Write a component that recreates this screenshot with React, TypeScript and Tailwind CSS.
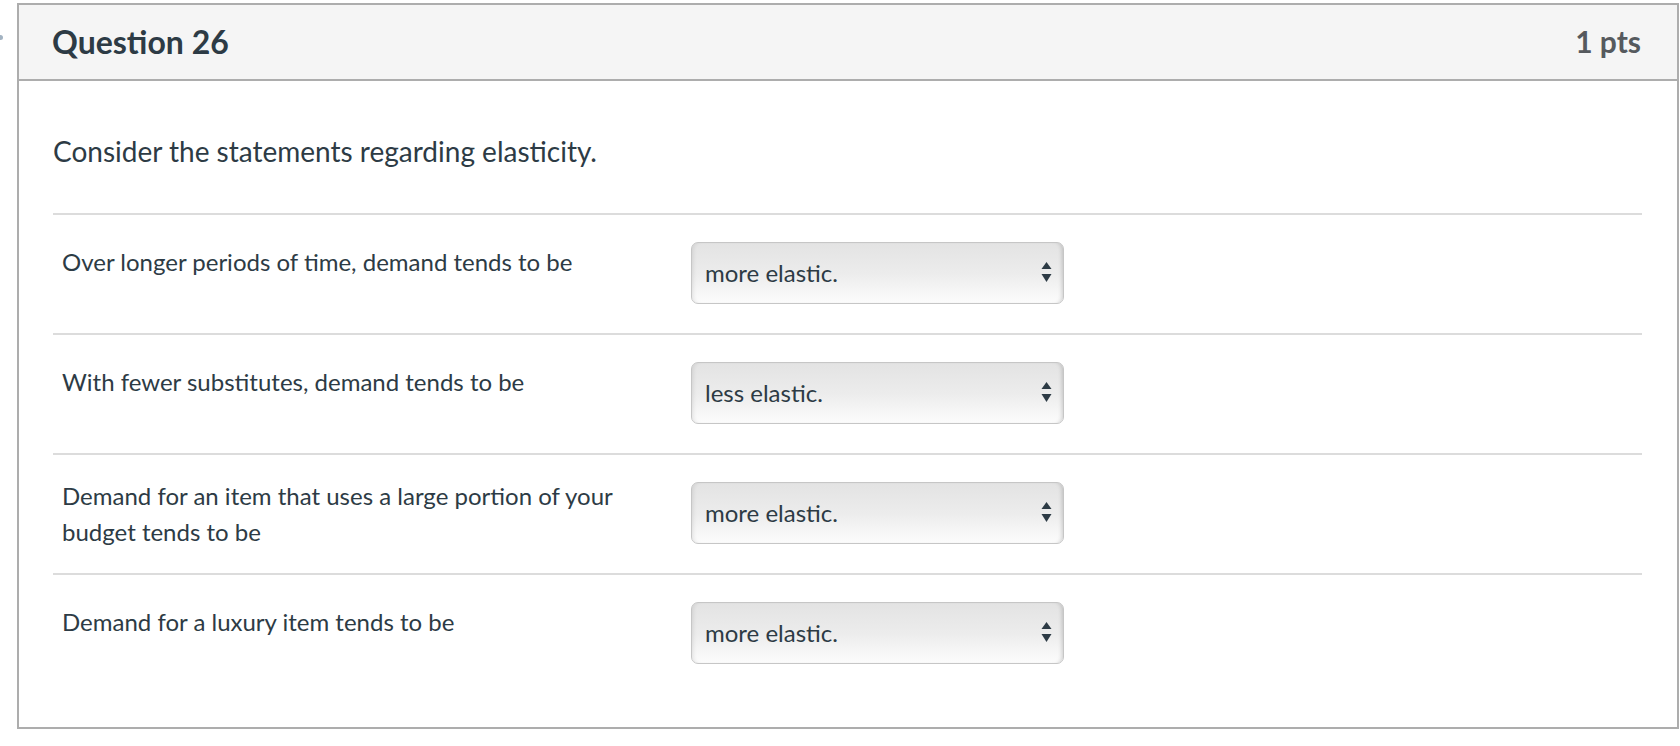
import React from "react";

type Row = { label: string; value: string; pad: string };

const rows: Row[] = [
  { label: "Over longer periods of time, demand tends to be", value: "more elastic.", pad: "pt-[29px]" },
  { label: "With fewer substitutes, demand tends to be", value: "less elastic.", pad: "pt-[29px]" },
  {
    label: "Demand for an item that uses a large portion of your budget tends to be",
    value: "more elastic.",
    pad: "pt-[23px]",
  },
  { label: "Demand for a luxury item tends to be", value: "more elastic.", pad: "pt-[29px]" },
];

function SelectBox({ value }: { value: string }) {
  return (
    <div className="flex h-[62px] w-[373px] items-center justify-between rounded-[7px] border border-[#c6c6c6] bg-linear-to-b from-[#e3e3e3] via-[#ececec] to-[#fcfcfc] pl-[13px] pr-[11px] shadow-[inset_-4px_0_4px_-3px_rgba(0,0,0,0.18),inset_4px_0_4px_-3px_rgba(0,0,0,0.1)]">
      <span className="text-[24px] leading-none text-[#2d3b45]">{value}</span>
      <svg width="11" height="22" viewBox="0 0 11 22" className="text-[#2d3b45]">
        <path d="M5.5 0 L10.5 7 L0.5 7 Z" fill="currentColor" />
        <path d="M0.5 12 L10.5 12 L5.5 20 Z" fill="currentColor" />
      </svg>
    </div>
  );
}

export default function App() {
  return (
    <div className="flex h-[746px] w-[1680px] bg-white font-['Lato',sans-serif] text-[#2d3b45]">
      {/* gutter */}
      <div className="w-[17px] shrink-0">
        <div className="mt-[35px] h-[5px] w-[3px] rounded-r-full bg-[#a3b3c2]" />
      </div>

      <div className="mt-[3px] h-[726px] w-[1662px] shrink-0 border-2 border-[#adadad]">
        {/* Header */}
        <div className="flex h-[76px] items-center justify-between border-b-2 border-[#adadad] bg-[#f5f5f5] pl-[33px] pr-[36px]">
          <h2 className="text-[32px] font-bold leading-tight text-[#2d3b45]">Question 26</h2>
          <span className="text-[30px] font-bold leading-tight text-[#565a5e]">1 pts</span>
        </div>

        {/* Body */}
        <div className="pl-[34px] pr-[35px] pt-[49px]">
          <p className="mb-[41px] text-[28px] leading-[1.5]">Consider the statements regarding elasticity.</p>

          {rows.map((row, i) => (
            <div key={i} className="flex border-t-2 border-[#dcdcdc]">
              <div className={`w-[638px] shrink-0 pl-[9px] pr-[24px] ${row.pad}`}>
                <p className="text-[24px] leading-[36px]">{row.label}</p>
              </div>
              <div className="pt-[27px] pb-[29px]">
                <SelectBox value={row.value} />
              </div>
            </div>
          ))}
        </div>
      </div>
    </div>
  );
}
